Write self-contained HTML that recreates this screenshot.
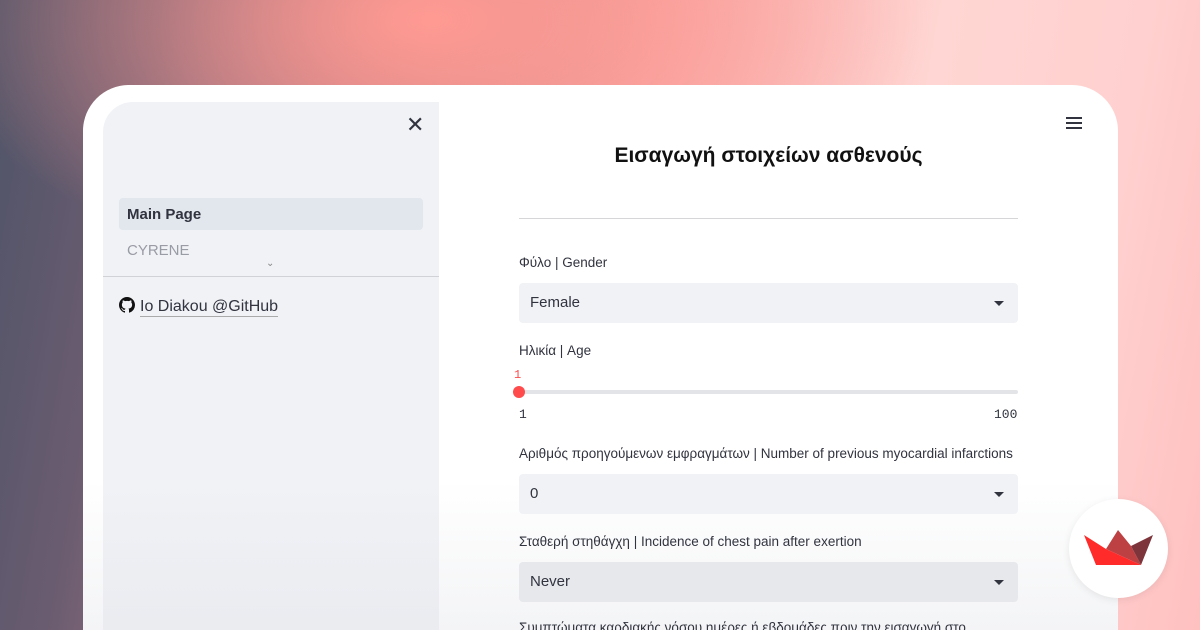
<!DOCTYPE html>
<html style="width:1200px;height:630px;overflow:hidden"><head><meta charset="utf-8"><style>
*{margin:0;padding:0;box-sizing:border-box}
body{width:1200px;height:630px;overflow:hidden;position:relative;font-family:"Source Sans Pro","Liberation Sans","DejaVu Sans",sans-serif;
background:radial-gradient(ellipse 500px 260px at 430px 20px,#ff9a92 0%,rgba(255,154,146,0) 100%),
linear-gradient(100deg,#4f5468 0%,#6a5c70 12%,#b87a84 30%,#f6a5a4 50%,#ffd6d3 72%,#ffd0cf 88%,#ffc0c0 100%);}
.card{position:absolute;left:83px;top:85px;width:1035px;height:545px;background:#fff;border-top-left-radius:46px;border-top-right-radius:46px}
.side{position:absolute;left:103px;top:102px;width:336px;height:528px;background:#f0f2f6;border-top-left-radius:30px}
.main{position:absolute;left:439px;top:102px;width:660px;height:528px;background:#fff}
.fade{position:absolute;left:83px;top:480px;width:1035px;height:150px;background:linear-gradient(rgba(225,227,232,0),rgba(222,224,229,.35))}
.t{position:absolute;white-space:nowrap;color:#31333f}
.sel{position:absolute;left:519px;width:499px;height:40px;background:#f0f2f6;border-radius:4px}
.sel span{position:absolute;left:11px;top:11px;font-size:15px;color:#31333f}
.sel i{position:absolute;right:14px;top:18px;border-left:5px solid transparent;border-right:5px solid transparent;border-top:5px solid #31333f}
.lab{font-size:13.5px}
</style></head><body>
<div class="card"></div>
<div class="side"></div>
<div class="main"></div>
<div class="fade"></div>
<div class="t" style="left:406px;top:112px;font-size:22px;color:#31333f">✕</div>
<div style="position:absolute;left:119px;top:198px;width:304px;height:32px;background:#e2e6ed;border-radius:4px"></div>
<div class="t" style="left:127px;top:206px;font-size:15px;font-weight:bold">Main Page</div>
<div class="t" style="left:127px;top:242px;font-size:15px;color:#9a9ca5">CYRENE</div>
<div class="t" style="left:266px;top:258px;font-size:10px;color:#888">⌄</div>
<div style="position:absolute;left:103px;top:276px;width:336px;height:1px;background:#d0d2d8"></div>
<svg style="position:absolute;left:119px;top:297px" width="16" height="16" viewBox="0 0 16 16"><path fill="#111" d="M8 0C3.58 0 0 3.58 0 8c0 3.54 2.290 6.530 5.47 7.59.4.07.55-.17.55-.38v-1.330c-2.23.48-2.7-1.07-2.7-1.07-.36-.92-.89-1.17-.89-1.170-.73-.5.05-.49.05-.49.8.06 1.23.83 1.23.83.71 1.22 1.870.87 2.33.66.07-.52.28-.87.51-1.07-1.78-.2-3.64-.89-3.64-3.95 0-.87.31-1.59.82-2.15-.08-.2-.36-1.02.08-2.12 0 0 .67-.21 2.2.82a7.6 7.6 0 014 0c1.53-1.04 2.2-.82 2.2-.82.44 1.1.16 1.920.08 2.12.51.56.82 1.27.82 2.15 0 3.07-1.87 3.75-3.65 3.950.29.25.54.73.54 1.48v2.2c0 .21.15.46.55.38A8 8 0 0016 8c0-4.42-3.58-8-8-8z"/></svg>
<div class="t" style="left:140px;top:297px;font-size:16px;border-bottom:1px solid #aaa;line-height:19px">Io Diakou @GitHub</div>
<div style="position:absolute;left:1066px;top:117px;width:16px;height:2px;background:#31333f;box-shadow:0 5px #31333f,0 10px #31333f"></div>
<div class="t" style="left:0;width:1537px;text-align:center;top:144px;font-size:21px;font-weight:bold;color:#111">Εισαγωγή στοιχείων ασθενούς</div>
<div style="position:absolute;left:519px;top:218px;width:499px;height:1px;background:#d6d6d9"></div>
<div class="t lab" style="left:519px;top:255px">Φύλο | Gender</div>
<div class="sel" style="top:283px"><span>Female</span><i></i></div>
<div class="t lab" style="left:519px;top:343px">Ηλικία | Age</div>
<div class="t" style="left:514px;top:368px;font-size:12px;color:#ff4b4b;font-family:'Liberation Mono',monospace">1</div>
<div style="position:absolute;left:519px;top:390px;width:499px;height:4px;background:#e3e4e8;border-radius:2px"></div>
<div style="position:absolute;left:513px;top:386px;width:12px;height:12px;background:#ff4b4b;border-radius:50%"></div>
<div class="t" style="left:519px;top:407px;font-size:13px;font-family:'Liberation Mono',monospace">1</div>
<div class="t" style="left:994px;top:407px;font-size:13px;font-family:'Liberation Mono',monospace">100</div>
<div class="t lab" style="left:519px;top:446px">Αριθμός προηγούμενων εμφραγμάτων | Number of previous myocardial infarctions</div>
<div class="sel" style="top:474px"><span>0</span><i></i></div>
<div class="t lab" style="left:519px;top:534px">Σταθερή στηθάγχη | Incidence of chest pain after exertion</div>
<div class="sel" style="top:562px;background:#e6e8ec"><span>Never</span><i></i></div>
<div class="t lab" style="left:519px;top:620px">Συμπτώματα καρδιακής νόσου ημέρες ή εβδομάδες πριν την εισαγωγή στο</div>
<div style="position:absolute;left:1069px;top:499px;width:99px;height:99px;border-radius:50%;background:#fff;box-shadow:0 2px 8px rgba(0,0,0,.08)"></div>
<svg style="position:absolute;left:1069px;top:499px" width="99" height="99" viewBox="1069 499 99 99">
<polygon points="1106,549 1118,530 1131,546 1141,565" fill="#bd4043"/>
<polygon points="1131,546 1153,535 1141,565" fill="#7d353b"/>
<polygon points="1084,535 1106,549 1141,565 1096,565" fill="#ff2b2b"/>
</svg>
</body></html>
